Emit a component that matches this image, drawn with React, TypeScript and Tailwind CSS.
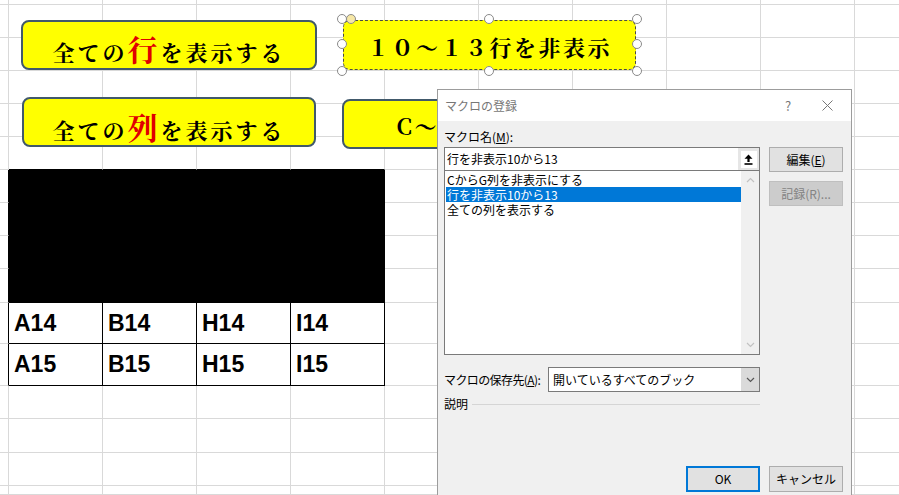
import React from "react";

const cellText: Record<number, string[]> = {
  10: ["A14", "B14", "H14", "I14"],
  11: ["A15", "B15", "H15", "I15"],
};

const cellClass = (r: number, c: number) => {
  const inTable = c >= 1 && c <= 4;
  if (inTable && r >= 6 && r <= 9) return "bg-black border-r border-b border-black";
  if (inTable && r === 5) return "border-r border-b border-r-[#d9d9d9] border-b-black";
  if (inTable && (r === 10 || r === 11)) return "bg-white border-r border-b border-black";
  if (c === 0 && r >= 6 && r <= 11) return "border-r border-b border-r-black border-b-[#d9d9d9]";
  if (c === 10) return "border-b border-[#d9d9d9]";
  return "border-r border-b border-[#d9d9d9]";
};

const Handle = ({ pos }: { pos: string }) => (
  <div className={`absolute w-[10px] h-[10px] rounded-full bg-white border border-[#8a8a8a] ${pos}`} />
);

const Chevron = ({ up, color }: { up?: boolean; color: string }) => (
  <svg width="9" height="6" viewBox="0 0 9 6">
    <path d={up ? "M1 5 L4.5 1.5 L8 5" : "M1 1 L4.5 4.5 L8 1"} fill="none" stroke={color} strokeWidth="1.2" />
  </svg>
);

const Sheet: React.FC = () => {
  const rows = Array.from({ length: 16 }, (_, i) => i);
  const cols = Array.from({ length: 11 }, (_, i) => i);
  return (
    <div className="grid h-full w-full grid-cols-[9px_repeat(9,94px)_1fr] grid-rows-[5px_33px_33px_33px_33px_33px_33px_33px_33px_34px_41px_42px_33px_34px_33px_1fr]">
      {rows.map((r) =>
        cols.map((c) => (
          <div key={`${r}-${c}`} className={`${cellClass(r, c)} flex items-center pl-[5px]`}>
            {cellText[r] && c >= 1 && c <= 4 ? (
              <span className="font-['Liberation_Sans',Arial,sans-serif] text-[23px] font-bold leading-none text-black">
                {cellText[r][c - 1]}
              </span>
            ) : null}
          </div>
        ))
      )}
    </div>
  );
};

const shapeFont = "font-['Noto_Serif_CJK_JP','Noto_Sans_CJK_JP',serif] font-bold text-black";

const Dialog: React.FC = () => (
  <div className="absolute left-[437px] top-[89px] w-[415px] h-[430px] border border-[#9c9c9c] bg-[#f0f0f0] font-['Noto_Sans_CJK_JP',sans-serif] text-[12px] text-black">
    <div className="flex h-[31px] items-center bg-white pl-[7px] text-[#777]">
      <span className="flex-1">マクロの登録</span>
      <span className="w-[20px] text-center text-[13px]">?</span>
      <span className="ml-[22px] mr-[17px] flex w-[14px] justify-center">
        <svg width="11" height="11" viewBox="0 0 11 11">
          <path d="M0.5 0.5 L10.5 10.5 M10.5 0.5 L0.5 10.5" stroke="#777" strokeWidth="1" />
        </svg>
      </span>
    </div>
    <div className="flex gap-[9px] pl-[6px] pr-[8px] pt-[6px]">
      <div className="flex w-[316px] flex-col">
        <div className="h-[20px] leading-[20px]">
          マクロ名(<span className="underline">M</span>):
        </div>
        <div className="flex h-[24px] items-center border border-[#7a7a7a] bg-white">
          <span className="flex-1 pl-[2px] leading-none">行を非表示10から13</span>
          <div className="flex h-full w-[21px] items-center justify-center bg-[#e6e6e6]">
            <div className="flex h-[17px] w-[16px] items-center justify-center bg-white">
              <svg width="9" height="11" viewBox="0 0 9 11">
                <path d="M4.5 0.5 L8.5 4.8 L5.6 4.8 L5.6 8 L3.4 8 L3.4 4.8 L0.5 4.8 Z" fill="#000" />
                <rect x="0.5" y="9.2" width="8" height="1.6" fill="#000" />
              </svg>
            </div>
          </div>
        </div>
        <div className="flex h-[184px] border border-t-0 border-[#7a7a7a] bg-white">
          <div className="flex-1 pl-[1px] pt-[1px] leading-[15px]">
            <div className="pl-[1px]">CからG列を非表示にする</div>
            <div className="bg-[#0078d7] pl-[1px] text-white">行を非表示10から13</div>
            <div className="pl-[1px]">全ての列を表示する</div>
          </div>
          <div className="flex w-[18px] flex-col items-center justify-between bg-[#f0f0f0] py-[6px]">
            <Chevron up color="#c2c2c2" />
            <Chevron color="#c2c2c2" />
          </div>
        </div>
        <div className="mt-[12px] flex h-[25px] items-center">
          <span className="w-[104px] tracking-[-0.6px]">
            マクロの保存先(<span className="underline">A</span>):
          </span>
          <div className="flex h-full flex-1 items-center border border-[#7a7a7a] bg-white">
            <span className="flex-1 pl-[4px] leading-none">開いているすべてのブック</span>
            <div className="flex h-full w-[18px] items-center justify-center bg-[#dadada]">
              <Chevron color="#555" />
            </div>
          </div>
        </div>
        <div className="mt-[3px] flex h-[18px] items-center">
          <span>説明</span>
          <div className="ml-[4px] h-px flex-1 bg-[#d5d5d5]" />
        </div>
      </div>
      <div className="flex w-[74px] flex-col pt-[20px]">
        <div className="flex h-[25px] items-center justify-center border border-[#adadad] bg-[#e1e1e1]">
          編集(<span className="underline">E</span>)
        </div>
        <div className="mt-[9px] flex h-[25px] items-center justify-center border border-[#bfbfbf] bg-[#cccccc] text-[#838383]">
          記録(R)...
        </div>
      </div>
    </div>
    <div className="mt-[53px] flex justify-end gap-[9px] pr-[8px]">
      <div className="flex h-[26px] w-[74px] items-center justify-center border-2 border-[#0078d7] bg-[#e1e1e1]">OK</div>
      <div className="flex h-[26px] w-[74px] items-center justify-center border border-[#adadad] bg-[#e1e1e1]">キャンセル</div>
    </div>
  </div>
);

const App: React.FC = () => {
  return (
    <div className="relative h-[495px] w-full overflow-hidden bg-white">
      <Sheet />

      <div className={`absolute left-[21px] top-[20px] flex h-[50px] w-[296px] items-center justify-center rounded-[8px] border-2 border-[#41596b] bg-[#ffff00] pt-[5px] ${shapeFont}`}>
        <span className="text-[22px] leading-none tracking-[3px]">
          全ての<span className="text-[30px] text-[#e00000]">行</span>を表示する
        </span>
      </div>

      <div className={`absolute left-[22px] top-[97px] flex h-[50px] w-[294px] items-center justify-center rounded-[8px] border-2 border-[#41596b] bg-[#ffff00] pt-[7px] ${shapeFont}`}>
        <span className="text-[22px] leading-none tracking-[3px]">
          全ての<span className="text-[30px] text-[#e00000]">列</span>を表示する
        </span>
      </div>

      <div className="absolute left-[343px] top-[20px] h-[50px] w-[293px]">
        <div className={`flex h-full w-full items-center justify-center rounded-[7px] border border-dashed border-[#4a4a4a] bg-[#ffff00] pt-[3px] ${shapeFont}`}>
          <span className="text-[22px] leading-none tracking-[2.5px]">１０～１３行を非表示</span>
        </div>
        <Handle pos="left-[-6px] top-[-6px]" />
        <Handle pos="left-[141px] top-[-6px]" />
        <Handle pos="right-[-6px] top-[-6px]" />
        <Handle pos="left-[-6px] top-[19px]" />
        <Handle pos="right-[-6px] top-[19px]" />
        <Handle pos="left-[-6px] bottom-[-6px]" />
        <Handle pos="left-[141px] bottom-[-6px]" />
        <Handle pos="right-[-6px] bottom-[-6px]" />
        <div className="absolute left-[3px] top-[-6px] h-[10px] w-[10px] rounded-full border border-[#8a8a8a] bg-[#f6e7a6]" />
      </div>

      <div className={`absolute left-[342px] top-[99px] flex h-[50px] w-[293px] items-center justify-center rounded-[8px] border-2 border-[#41596b] bg-[#ffff00] pt-[4px] ${shapeFont}`}>
        <span className="text-[22px] leading-none tracking-[2.5px]">C～G列を非表示</span>
      </div>

      <Dialog />
    </div>
  );
};

export default App;
